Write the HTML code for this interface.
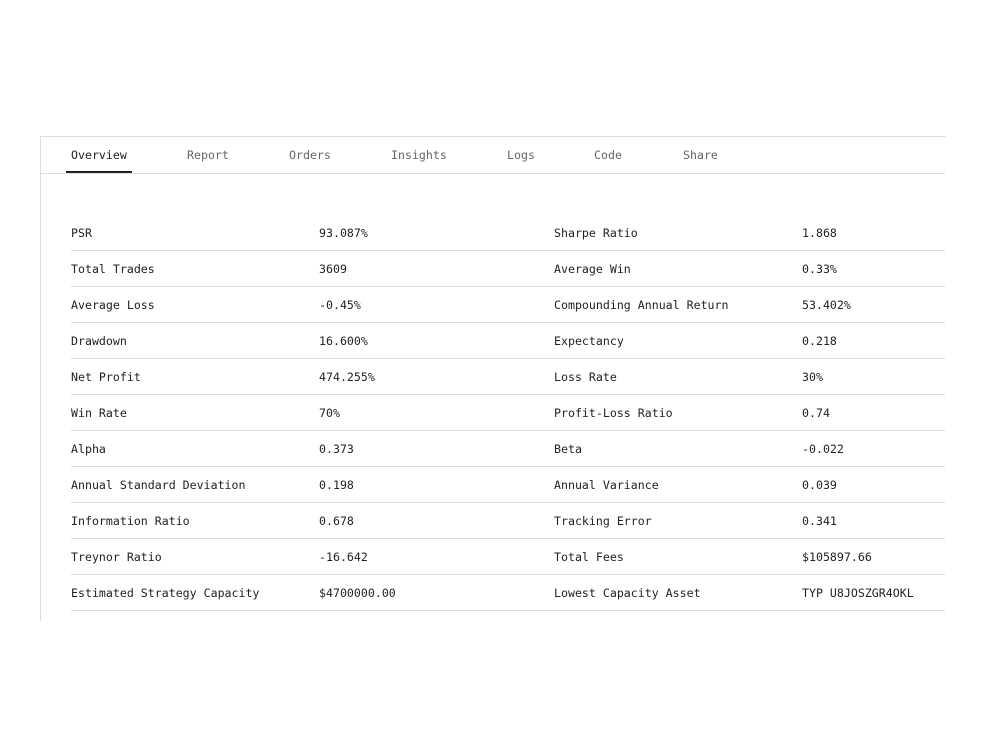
<!DOCTYPE html>
<html><head><style>
body{margin:0;width:1000px;height:750px;background:#fff;font-family:"DejaVu Sans Mono","Liberation Mono",monospace;font-size:11.6px;color:#222;position:relative;overflow:hidden}
.box{position:absolute;left:40px;top:136px;width:905px;height:484px;border-left:1px solid #ddd;border-top:1px solid #ddd}
.tabline{position:absolute;left:40px;top:173px;width:905px;height:1px;background:#ddd}
.tab{position:absolute;top:148px;color:#666;line-height:14px}
.act{color:#222}
.ul{position:absolute;left:66px;top:171px;width:66px;height:2px;background:#222}
.row{position:absolute;left:71px;width:874px;height:36px;border-bottom:1px solid #ddd}
.row span{position:absolute;top:12px;line-height:14px}
</style></head><body>
<div class="box"></div>
<div class="tabline"></div>
<div class="tab act" style="left:71px">Overview</div>
<div class="tab" style="left:187px">Report</div>
<div class="tab" style="left:289px">Orders</div>
<div class="tab" style="left:391px">Insights</div>
<div class="tab" style="left:507px">Logs</div>
<div class="tab" style="left:594px">Code</div>
<div class="tab" style="left:683px">Share</div>
<div class="ul"></div>
<div class="row" style="top:214px"><span style="left:0">PSR</span><span style="left:248px">93.087%</span><span style="left:483px">Sharpe Ratio</span><span style="left:731px">1.868</span></div>
<div class="row" style="top:250px"><span style="left:0">Total Trades</span><span style="left:248px">3609</span><span style="left:483px">Average Win</span><span style="left:731px">0.33%</span></div>
<div class="row" style="top:286px"><span style="left:0">Average Loss</span><span style="left:248px">-0.45%</span><span style="left:483px">Compounding Annual Return</span><span style="left:731px">53.402%</span></div>
<div class="row" style="top:322px"><span style="left:0">Drawdown</span><span style="left:248px">16.600%</span><span style="left:483px">Expectancy</span><span style="left:731px">0.218</span></div>
<div class="row" style="top:358px"><span style="left:0">Net Profit</span><span style="left:248px">474.255%</span><span style="left:483px">Loss Rate</span><span style="left:731px">30%</span></div>
<div class="row" style="top:394px"><span style="left:0">Win Rate</span><span style="left:248px">70%</span><span style="left:483px">Profit-Loss Ratio</span><span style="left:731px">0.74</span></div>
<div class="row" style="top:430px"><span style="left:0">Alpha</span><span style="left:248px">0.373</span><span style="left:483px">Beta</span><span style="left:731px">-0.022</span></div>
<div class="row" style="top:466px"><span style="left:0">Annual Standard Deviation</span><span style="left:248px">0.198</span><span style="left:483px">Annual Variance</span><span style="left:731px">0.039</span></div>
<div class="row" style="top:502px"><span style="left:0">Information Ratio</span><span style="left:248px">0.678</span><span style="left:483px">Tracking Error</span><span style="left:731px">0.341</span></div>
<div class="row" style="top:538px"><span style="left:0">Treynor Ratio</span><span style="left:248px">-16.642</span><span style="left:483px">Total Fees</span><span style="left:731px">$105897.66</span></div>
<div class="row" style="top:574px"><span style="left:0">Estimated Strategy Capacity</span><span style="left:248px">$4700000.00</span><span style="left:483px">Lowest Capacity Asset</span><span style="left:731px">TYP U8JOSZGR4OKL</span></div>
</body></html>
